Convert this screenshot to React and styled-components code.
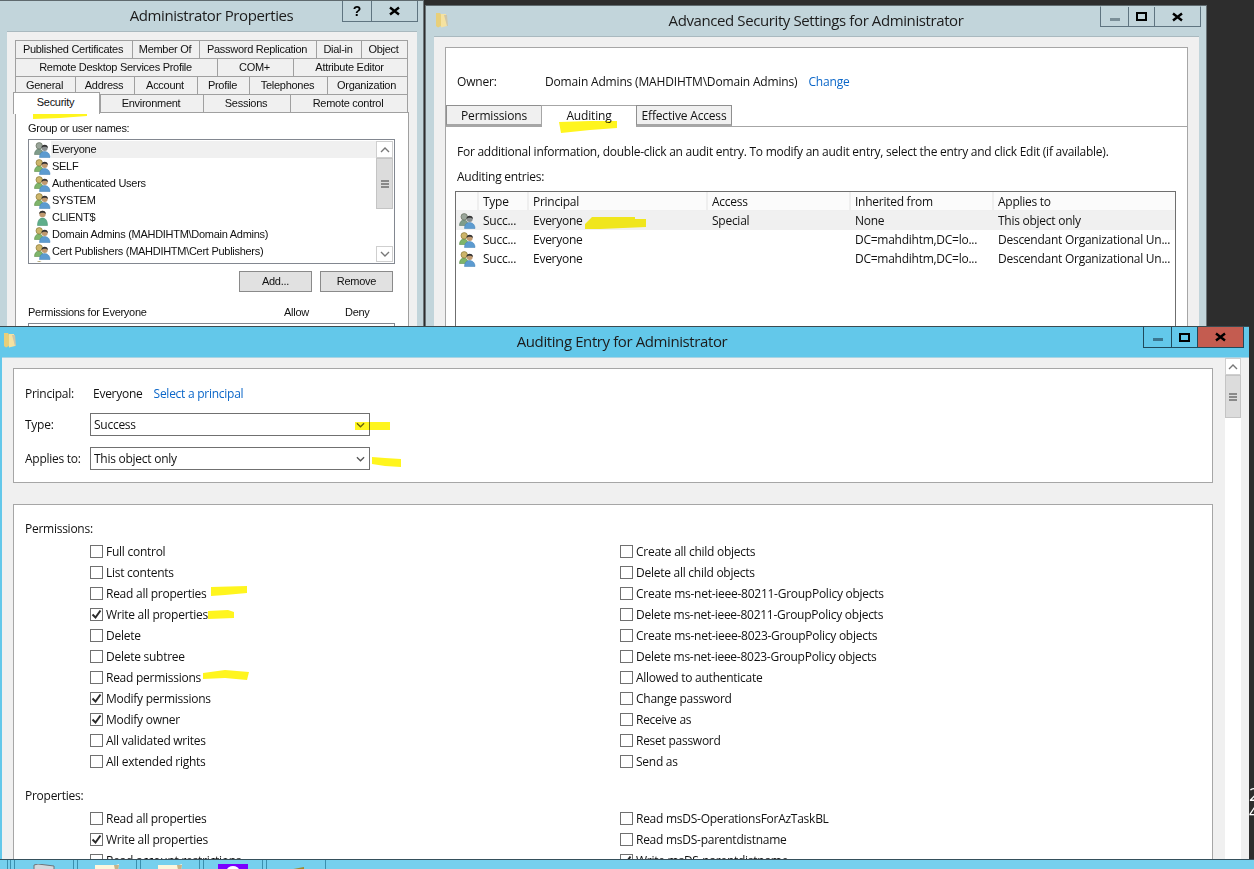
import React from "react";
import styled, { createGlobalStyle } from "styled-components";

const Global = createGlobalStyle`
  html, body { margin: 0; padding: 0; background: #2d2d2d; }
  * { box-sizing: border-box; }
`;

const Desktop = styled.div`
  width: 1254px; height: 869px; background: #2d2d2d; overflow: hidden;
  display: flex; flex-direction: column;
`;
const Workspace = styled.div`
  position: relative; height: 859px; flex: none; overflow: hidden;
`;
const DesktopDigits = styled.div`
  position: absolute; left: 1249px; top: 786px; color: #fff;
  font: 18px/17px "Open Sans", sans-serif;
`;
const Window = styled.section`
  position: absolute; left: ${p => p.$x}px; top: ${p => p.$y}px;
  width: ${p => p.$w}px; height: ${p => p.$h}px;
  background: ${p => p.$active ? "#63c8ea" : "#c2d5db"};
  border-top: 1px solid ${p => p.$active ? "#3b4a50" : "#5f6a6e"};
  border-right: ${p => p.$noEdge ? "0" : "1px solid #6b7478"};
  border-left: ${p => p.$edge ? "1px solid #6b7478" : "0"};
  overflow: hidden; display: flex; flex-direction: column;
  font: ${p => p.$classic ? '11px "Liberation Sans"' : '12px "Open Sans"'}, sans-serif;
  letter-spacing: ${p => p.$classic ? "-0.28px" : "-0.26px"};
  color: #111;
`;
const TitleBar = styled.header`
  flex: none; height: ${p => p.$h}px; display: grid; grid-template-columns: 1fr auto 1fr;
`;
const TitleIcon = styled.div`
  padding: ${p => p.$top}px 0 0 ${p => p.$left}px; line-height: 0;
`;
const Title = styled.h1`
  margin: 0 ${p => p.$shift || 0}px 0 0; font: 400 15px/${p => p.$lh}px "Open Sans", sans-serif; letter-spacing: -0.4px; color: #1c1c1c;
  white-space: nowrap;
`;
const Controls = styled.div`
  justify-self: end; display: flex; height: 21px; margin-right: ${p => p.$right}px;
  border: 1px solid ${p => p.$dark ? "#1f4a5c" : "#5f7480"}; border-top: ${p => p.$flush ? "0" : "1px solid transparent"};
`;
const Control = styled.div`
  width: ${p => p.$w}px; display: flex; align-items: center; justify-content: center;
  background: ${p => p.$red ? "#c45c50" : "transparent"};
  border-left: ${p => p.$first ? "0" : `1px solid ${p.$dark ? "#1f4a5c" : "#5f7480"}`};
  font: 700 14px "Liberation Sans", sans-serif; color: #000; letter-spacing: 0;
`;

const Win = () => (
  <svg width="11" height="10" viewBox="0 0 11 10"><path d="M1 1.5l9 7M10 1.5l-9 7" stroke="#000" strokeWidth="2.4" /></svg>
);
const Max = () => (
  <svg width="11" height="9" viewBox="0 0 11 9"><rect x="1" y="1" width="9" height="7" fill="none" stroke="#000" strokeWidth="2" /></svg>
);
const Min = ({ color }) => (
  <svg width="10" height="10" viewBox="0 0 10 10"><rect x="0" y="6" width="10" height="3" fill={color} /></svg>
);
const Folder = () => (
  <svg width="14" height="16" viewBox="0 0 14 16">
    <path d="M1 1h4l1 1.5V14L3 15.5 1 14z" fill="#e8cf7a" />
    <path d="M6 2h5l1 12-6 1.5z" fill="#f5e2a0" />
    <path d="M9 3h3l1 11h-1z" fill="#cfc6a8" />
  </svg>
);

const WinControls = ({ dark, flush, right, withHelp, red }) => (
  <Controls $dark={dark} $flush={flush} $right={right}>
    {withHelp ? (
      <Control $w={28} $first>?</Control>
    ) : (
      <>
        <Control $w={27} $first><Min color={dark ? "#3a7690" : "#7b8f98"} /></Control>
        <Control $w={26} $dark={dark}><Max /></Control>
      </>
    )}
    <Control $w={46} $dark={dark} $red={red}><Win /></Control>
  </Controls>
);

/* ---------- Properties dialog ---------- */
const ClassicBody = styled.div`
  flex: 1; margin: 0 6px 0 7px; background: #f0f0f0; border-top: 1px solid #a9b9bf;
  padding: 8px 9px 0 8px; display: flex; flex-direction: column;
`;
const TabRow = styled.div`
  display: flex; height: 18px; flex: none;
`;
const ClassicTab = styled.div`
  width: ${p => p.$w}px; height: 19px; margin-right: -1px; flex: none;
  background: #f0f0f0; border: 1px solid #a0a0a0; padding-right: 2px;
  text-align: center; line-height: 17px; white-space: nowrap;
`;
const ClassicTabOn = styled(ClassicTab)`
  background: #fff; height: 22px; margin: -2px 0 0 -2px; position: relative; z-index: 2;
  border-bottom: 0; line-height: 18px;
`;
const ClassicPanel = styled.div`
  flex: none; width: 394px; height: 240px; background: #fff; border: 1px solid #a0a0a0;
  padding: 8px 13px 0 12px; display: flex; flex-direction: column;
`;
const GroupLabel = styled.div`line-height: 14px; height: 18px;`;
const ListBox = styled.div`
  width: 367px; height: 125px; border: 1px solid #828790; padding: 1px; display: flex; overflow: hidden;
`;
const ListRows = styled.div`flex: 1; overflow: hidden;`;
const ListRow = styled.div`
  height: 17px; display: flex; align-items: center; padding-left: 4px; white-space: nowrap;
`;
const ListName = styled.span`
  flex: 1; height: 17px; line-height: 17px; padding-left: 1px;
  background: ${p => p.$on ? "#f0f0f0" : "transparent"};
`;
const Scroll = styled.div`
  flex: none; width: ${p => p.$w}px; display: flex; flex-direction: column; background: #fff;
`;
const ScrollBtn = styled.div`
  height: ${p => p.$h}px; flex: none; display: flex; align-items: center; justify-content: center;
  background: #fff; border: 1px solid #cfcfcf;
`;
const ScrollThumb = styled.div`
  height: ${p => p.$h}px; flex: none; display: flex; align-items: center; justify-content: center;
  background: #dcdcdc; border: 1px solid #c4c4c4;
`;
const ScrollFill = styled.div`flex: 1;`;
const ButtonRow = styled.div`
  display: flex; justify-content: flex-end; gap: 8px; padding: 7px 2px 0 0; height: 29px; flex: none; width: 367px;
`;
const PushButton = styled.div`
  width: 73px; height: 21px; background: #e1e1e1; border: 1px solid #8a8a8a;
  text-align: center; line-height: 19px;
`;
const PermHead = styled.div`
  display: grid; grid-template-columns: 256px 61px auto; margin-top: 12px; line-height: 14px; height: 18px;
`;
const PermBox = styled.div`
  width: 367px; height: 20px; border: 1px solid #828790;
`;

const Chevron = ({ up, color = "#777", w = 10, h = 6 }) => (
  <svg width={w} height={h} viewBox="0 0 10 6">
    <path d={up ? "M1 5l4-4 4 4" : "M1 1l4 4 4-4"} fill="none" stroke={color} strokeWidth="1.4" />
  </svg>
);
const Grip = () => (
  <svg width="8" height="8" viewBox="0 0 8 8"><path d="M0 1h8M0 4h8M0 7h8" stroke="#6d6d6d" strokeWidth="1.3" /></svg>
);
const Users = ({ muted }) => (
  <svg width="17" height="16" viewBox="0 0 17 16" style={{ flex: "none" }}>
    <path d="M0.500 12.500c0-3.500 2-5.500 4.500-5.500s4 2 4 5.500z" fill={muted ? "#7f9c8a" : "#7fb56a"} stroke={muted ? "#5f7a6a" : "#5c8f4c"} strokeWidth=".6" />
    <circle cx="5.200" cy="3.800" r="3.200" fill={muted ? "#9aa59a" : "#cdb56a"} stroke={muted ? "#66705f" : "#8a7a3a"} strokeWidth=".7" />
    <path d="M5.500 15.500c0-4 2.200-6 5-6s5.500 2 5.500 6z" fill="#5c9bd0" stroke="#3e7fb5" strokeWidth=".5" />
    <circle cx="10.700" cy="6" r="3" fill={muted ? "#8a8f90" : "#c09a70"} />
    <path d="M7.500 6c0-2.300 1.400-3.300 3.200-3.300s3.200 1 3.200 3.300c-1-1-1.800-1.300-3.200-1.300s-2.200.3-3.200 1.300z" fill="#333" />
  </svg>
);
const Person = () => (
  <svg width="17" height="16" viewBox="0 0 17 16" style={{ flex: "none" }}>
    <path d="M3.500 15.500c0-5 2-7.500 5-7.500s5 2.500 5 7.500z" fill="#5fae8a" stroke="#3f8a68" strokeWidth=".5" />
    <circle cx="8.500" cy="4" r="3.200" fill="#c09a70" />
    <path d="M5.200 4c0-2.300 1.500-3.300 3.300-3.300s3.300 1 3.300 3.300c-1-1-1.900-1.300-3.300-1.300s-2.300.3-3.300 1.300z" fill="#333" />
  </svg>
);

const listNames = ["Everyone", "SELF", "Authenticated Users", "SYSTEM", "CLIENT$", "Domain Admins (MAHDIHTM\\Domain Admins)", "Cert Publishers (MAHDIHTM\\Cert Publishers)", ""];

const PropertiesWindow = () => (
  <Window $x={0} $y={0} $w={424} $h={330} $classic>
    <TitleBar $h={30}>
      <div />
      <Title $lh={28}>Administrator Properties</Title>
      <WinControls withHelp right={5} flush />
    </TitleBar>
    <ClassicBody>
      <TabRow>
        {[["Published Certificates", 118], ["Member Of", 68], ["Password Replication", 118], ["Dial-in", 46], ["Object", 47]].map(([t, w]) => <ClassicTab key={t} $w={w}>{t}</ClassicTab>)}
      </TabRow>
      <TabRow>
        {[["Remote Desktop Services Profile", 203], ["COM+", 77], ["Attribute Editor", 115]].map(([t, w]) => <ClassicTab key={t} $w={w}>{t}</ClassicTab>)}
      </TabRow>
      <TabRow>
        {[["General", 61], ["Address", 60], ["Account", 64], ["Profile", 53], ["Telephones", 79], ["Organization", 81]].map(([t, w]) => <ClassicTab key={t} $w={w}>{t}</ClassicTab>)}
      </TabRow>
      <TabRow>
        <ClassicTabOn $w={87}>Security</ClassicTabOn>
        {[["Environment", 104], ["Sessions", 88], ["Remote control", 118]].map(([t, w]) => <ClassicTab key={t} $w={w}>{t}</ClassicTab>)}
      </TabRow>
      <ClassicPanel>
        <GroupLabel>Group or user names:</GroupLabel>
        <ListBox>
          <ListRows>
            {listNames.map((n, i) => (
              <ListRow key={i}>
                {i === 4 ? <Person /> : <Users muted={i === 0} />}
                <ListName $on={i === 0}>{n}</ListName>
              </ListRow>
            ))}
          </ListRows>
          <Scroll $w={17}>
            <ScrollBtn $h={17}><Chevron up /></ScrollBtn>
            <ScrollThumb $h={51}><Grip /></ScrollThumb>
            <ScrollFill />
            <ScrollBtn $h={16}><Chevron /></ScrollBtn>
          </Scroll>
        </ListBox>
        <ButtonRow>
          <PushButton>Add...</PushButton>
          <PushButton>Remove</PushButton>
        </ButtonRow>
        <PermHead><span>Permissions for Everyone</span><span>Allow</span><span>Deny</span></PermHead>
        <PermBox />
      </ClassicPanel>
    </ClassicBody>
  </Window>
);

/* ---------- Advanced security ---------- */
const ModernBody = styled.div`
  flex: 1; margin: 0 7px 0 8px; background: #f0f0f0; border-top: 1px solid #a9b9bf;
  padding: 10px 11px 0 11px; display: flex; flex-direction: column; min-height: 0;
`;
const WhitePanel = styled.div`
  background: #fff; border: 1px solid #a6a6a6; flex: none;
`;
const OwnerRow = styled.div`
  display: flex; height: 57px; padding: 25px 0 0 11px; line-height: 18px; white-space: nowrap; letter-spacing: -0.17px;
`;
const OwnerLabel = styled.span`width: 88px;`;
const Link = styled.span`color: #0a66c8; margin-left: ${p => p.$gap}px;`;
const TabStrip = styled.div`
  display: flex; height: 22px; border-bottom: 1px solid #a6a6a6;
`;
const ModernTab = styled.div`
  width: ${p => p.$w}px; height: 21px; background: #f0f0f0;
  border: 1px solid #8f8f8f; border-bottom: 2px solid #a6a6a6; border-right-width: ${p => p.$last ? "1px" : "0"};
  text-align: center; line-height: 20px; letter-spacing: -0.17px;
`;
const ModernTabOn = styled(ModernTab)`
  background: #fff; border-color: #a6a6a6; border-bottom: 0; height: 22px; border-right-width: 0;
`;
const Info = styled.p`
  margin: 16px 0 0 11px; line-height: 18px; white-space: nowrap;
`;
const Entries = styled.div`
  margin: 7px 0 0 11px; line-height: 18px;
`;
const Table = styled.div`
  margin: 5px 0 0 9px; width: 721px; height: 140px; border: 1px solid #6f6f6f; overflow: hidden;
`;
const columns = "21px 50px 179px 143px 143px 1fr";
const TRow = styled.div`
  display: grid; grid-template-columns: ${columns}; height: 19px; align-items: center;
  background: ${p => p.$on ? "#f0f0f0" : "transparent"}; white-space: nowrap; line-height: 19px;
`;
const THead = styled.div`
  display: grid; grid-template-columns: ${columns}; height: 19px; background: #fbfbfb;
  border-bottom: 1px solid #efefef;
`;
const TH = styled.div`
  border-left: ${p => p.$first ? "0" : "2px solid #efefef"}; padding-left: 4px; line-height: 19px;
`;
const TD = styled.div`padding-left: 6px; overflow: hidden;`;
const TIcon = styled.div`padding-left: 3px; line-height: 0;`;

const rows = [
  ["Succ...", "Everyone", "Special", "None", "This object only"],
  ["Succ...", "Everyone", "", "DC=mahdihtm,DC=lo...", "Descendant Organizational Un..."],
  ["Succ...", "Everyone", "", "DC=mahdihtm,DC=lo...", "Descendant Organizational Un..."],
];

const AdvancedWindow = () => (
  <Window $x={425} $y={5} $w={782} $h={325} $edge>
    <TitleBar $h={30}>
      <TitleIcon $top={6} $left={9}><Folder /></TitleIcon>
      <Title $lh={28}>Advanced Security Settings for Administrator</Title>
      <WinControls right={5} />
    </TitleBar>
    <ModernBody>
      <WhitePanel>
        <OwnerRow>
          <OwnerLabel>Owner:</OwnerLabel>
          <span>Domain Admins (MAHDIHTM\Domain Admins)</span>
          <Link $gap={11}>Change</Link>
        </OwnerRow>
        <TabStrip>
          <ModernTab $w={95}>Permissions</ModernTab>
          <ModernTabOn $w={95}>Auditing</ModernTabOn>
          <ModernTab $w={96} $last>Effective Access</ModernTab>
        </TabStrip>
        <Info>For additional information, double-click an audit entry. To modify an audit entry, select the entry and click Edit (if available).</Info>
        <Entries>Auditing entries:</Entries>
        <Table>
          <THead>
            <TH $first />
            <TH>Type</TH><TH>Principal</TH><TH>Access</TH><TH>Inherited from</TH><TH>Applies to</TH>
          </THead>
          {rows.map((r, i) => (
            <TRow key={i} $on={i === 0}>
              <TIcon><Users muted={i === 0} /></TIcon>
              {r.map((c, j) => <TD key={j}>{c}</TD>)}
            </TRow>
          ))}
        </Table>
      </WhitePanel>
    </ModernBody>
  </Window>
);

/* ---------- Auditing entry ---------- */
const EntryBody = styled.div`
  flex: 1; margin-left: 2px; background: #f0f0f0; border-top: 1px solid #a9d4e4;
  display: flex; min-height: 0;
`;
const EntryMain = styled.div`
  flex: none; width: 1223px; padding: 10px 12px 0 11px; display: flex; flex-direction: column; gap: 21px;
`;
const HeadPanel = styled(WhitePanel)`
  height: 115px; padding: 15px 0 0 11px; display: grid; grid-template-columns: 65px 1fr; grid-template-rows: 20px 29px 27px;
  row-gap: 6px; align-items: center;
`;
const FieldLabel = styled.div`line-height: 18px;`;
const FieldValue = styled.div`line-height: 18px; padding-left: 3px;`;
const Select = styled.div`
  width: 280px; height: 23px; background: #fff; border: 1px solid #707070; display: flex; align-items: center;
  justify-content: space-between; padding: 0 4px 0 3px;
`;
const PermPanel = styled(WhitePanel)`
  height: 360px; padding: 14px 0 0 11px; overflow: hidden;
`;
const SectionLabel = styled.div`
  line-height: 20px; height: 22px;
  margin-top: ${p => p.$gap || 0}px;
`;
const CheckGrid = styled.div`
  display: grid; grid-template-columns: 530px 530px; grid-auto-rows: 21px; padding-left: 65px;
`;
const CheckRow = styled.label`
  display: flex; align-items: center; gap: 3px; white-space: nowrap;
`;
const Box = styled.span`
  width: 13px; height: 13px; flex: none; border: 1px solid #707070; background: #fff;
  display: flex; align-items: center; justify-content: center;
`;
const EntryScroll = styled.div`
  flex: none; width: 16px; display: flex; flex-direction: column; background: #fff;
`;

const Check = ({ label, on }) => (
  <CheckRow>
    <Box>
      {on && <svg width="11" height="11" viewBox="0 0 11 11"><path d="M1.500 5.500l3 3 5-7" fill="none" stroke="#2b2b2b" strokeWidth="2" /></svg>}
    </Box>
    <span>{label}</span>
  </CheckRow>
);

const permissions = [
  ["Full control"], ["Create all child objects"],
  ["List contents"], ["Delete all child objects"],
  ["Read all properties"], ["Create ms-net-ieee-80211-GroupPolicy objects"],
  ["Write all properties", true], ["Delete ms-net-ieee-80211-GroupPolicy objects"],
  ["Delete"], ["Create ms-net-ieee-8023-GroupPolicy objects"],
  ["Delete subtree"], ["Delete ms-net-ieee-8023-GroupPolicy objects"],
  ["Read permissions"], ["Allowed to authenticate"],
  ["Modify permissions", true], ["Change password"],
  ["Modify owner", true], ["Receive as"],
  ["All validated writes"], ["Reset password"],
  ["All extended rights"], ["Send as"],
];
const properties = [
  ["Read all properties"], ["Read msDS-OperationsForAzTaskBL"],
  ["Write all properties", true], ["Read msDS-parentdistname"],
  ["Read account restrictions"], ["Write msDS-parentdistname", true],
];

const EntryWindow = () => (
  <Window $x={0} $y={326} $w={1249} $h={533} $active $noEdge>
    <TitleBar $h={30}>
      <TitleIcon $top={5} $left={3}><Folder /></TitleIcon>
      <Title $lh={28} $shift={5}>Auditing Entry for Administrator</Title>
      <WinControls dark flush right={5} red />
    </TitleBar>
    <EntryBody>
      <EntryMain>
        <HeadPanel>
          <FieldLabel>Principal:</FieldLabel>
          <FieldValue>Everyone<Link $gap={11}>Select a principal</Link></FieldValue>
          <FieldLabel>Type:</FieldLabel>
          <Select>Success<Chevron color="#666" w={9} /></Select>
          <FieldLabel>Applies to:</FieldLabel>
          <Select>This object only<Chevron color="#555" w={9} /></Select>
        </HeadPanel>
        <PermPanel>
          <SectionLabel>Permissions:</SectionLabel>
          <CheckGrid>
            {permissions.map(([l, on]) => <Check key={l} label={l} on={on} />)}
          </CheckGrid>
          <SectionLabel $gap={14}>Properties:</SectionLabel>
          <CheckGrid>
            {properties.map(([l, on]) => <Check key={l} label={l} on={on} />)}
          </CheckGrid>
        </PermPanel>
      </EntryMain>
      <EntryScroll>
        <ScrollBtn $h={17}><Chevron up /></ScrollBtn>
        <ScrollThumb $h={43}><Grip /></ScrollThumb>
        <ScrollFill />
      </EntryScroll>
    </EntryBody>
  </Window>
);

/* ---------- Taskbar ---------- */
const Taskbar = styled.footer`
  flex: none; height: 10px; background: #76d0ee; border-top: 1px solid #35505c;
  display: flex; gap: 3px; padding-left: 7px; overflow: hidden;
`;
const TaskCell = styled.div`
  width: ${p => p.$w}px; flex: none; border-left: 1px solid #3a8fae; border-right: 1px solid #3a8fae;
  display: flex; justify-content: center; padding-top: ${p => p.$top || 4}px; line-height: 0;
`;

const Markers = styled.svg`
  position: absolute; left: 0; top: 0; pointer-events: none; mix-blend-mode: multiply;
`;

const marks = [
  "33,110 60,108 87,107 87,116 60,118 33,119",
  "559,122 590,121 617,121 617,128 590,130 561,133",
  "585,224 592,217 635,217 635,219 646,219 646,227 600,229 585,229",
  "355,422 390,422 390,430 355,430",
  "372,457 385,458 401,459 401,467 385,466 372,464",
  "211,587 247,586 247,593 225,595 211,596",
  "208,611 228,610 234,612 234,618 208,619",
  "203,673 225,670 249,672 247,680 225,678 203,679",
];

export default function App() {
  return (
    <Desktop>
      <Global />
      <Workspace>
        <DesktopDigits>2<br />4</DesktopDigits>
        <PropertiesWindow />
        <AdvancedWindow />
        <EntryWindow />
        <Markers width="1254" height="859" viewBox="0 0 1254 859">
          {marks.map(m => <polygon key={m} points={m} fill="#fff51e" />)}
        </Markers>
      </Workspace>
      <Taskbar>
        <TaskCell $w={4} />
        <TaskCell $w={60}><svg width="22" height="6"><path d="M1 1l4-1 16 2v4H1z" fill="#d4d8dc" stroke="#6d747a" /></svg></TaskCell>
        <TaskCell $w={60}><svg width="26" height="6"><path d="M1 1h21l3-1-1 6H1z" fill="#fdf6dc" /><path d="M20 1h5l-1 5h-3z" fill="#c8b48a" /></svg></TaskCell>
        <TaskCell $w={60}><svg width="26" height="6"><path d="M1 1h21l3-1-1 6H1z" fill="#fdf6dc" /><path d="M20 1h5l-1 5h-3z" fill="#c8b48a" /></svg></TaskCell>
        <TaskCell $w={60}><svg width="30" height="6"><rect width="30" height="6" fill="#7a00ff" /><ellipse cx="15" cy="6" rx="6" ry="4" fill="#fff" /></svg></TaskCell>
        <TaskCell $w={60} $top={7}><svg width="16" height="3"><path d="M0 3l16-3v3z" fill="#a08a30" /></svg></TaskCell>
      </Taskbar>
    </Desktop>
  );
}
